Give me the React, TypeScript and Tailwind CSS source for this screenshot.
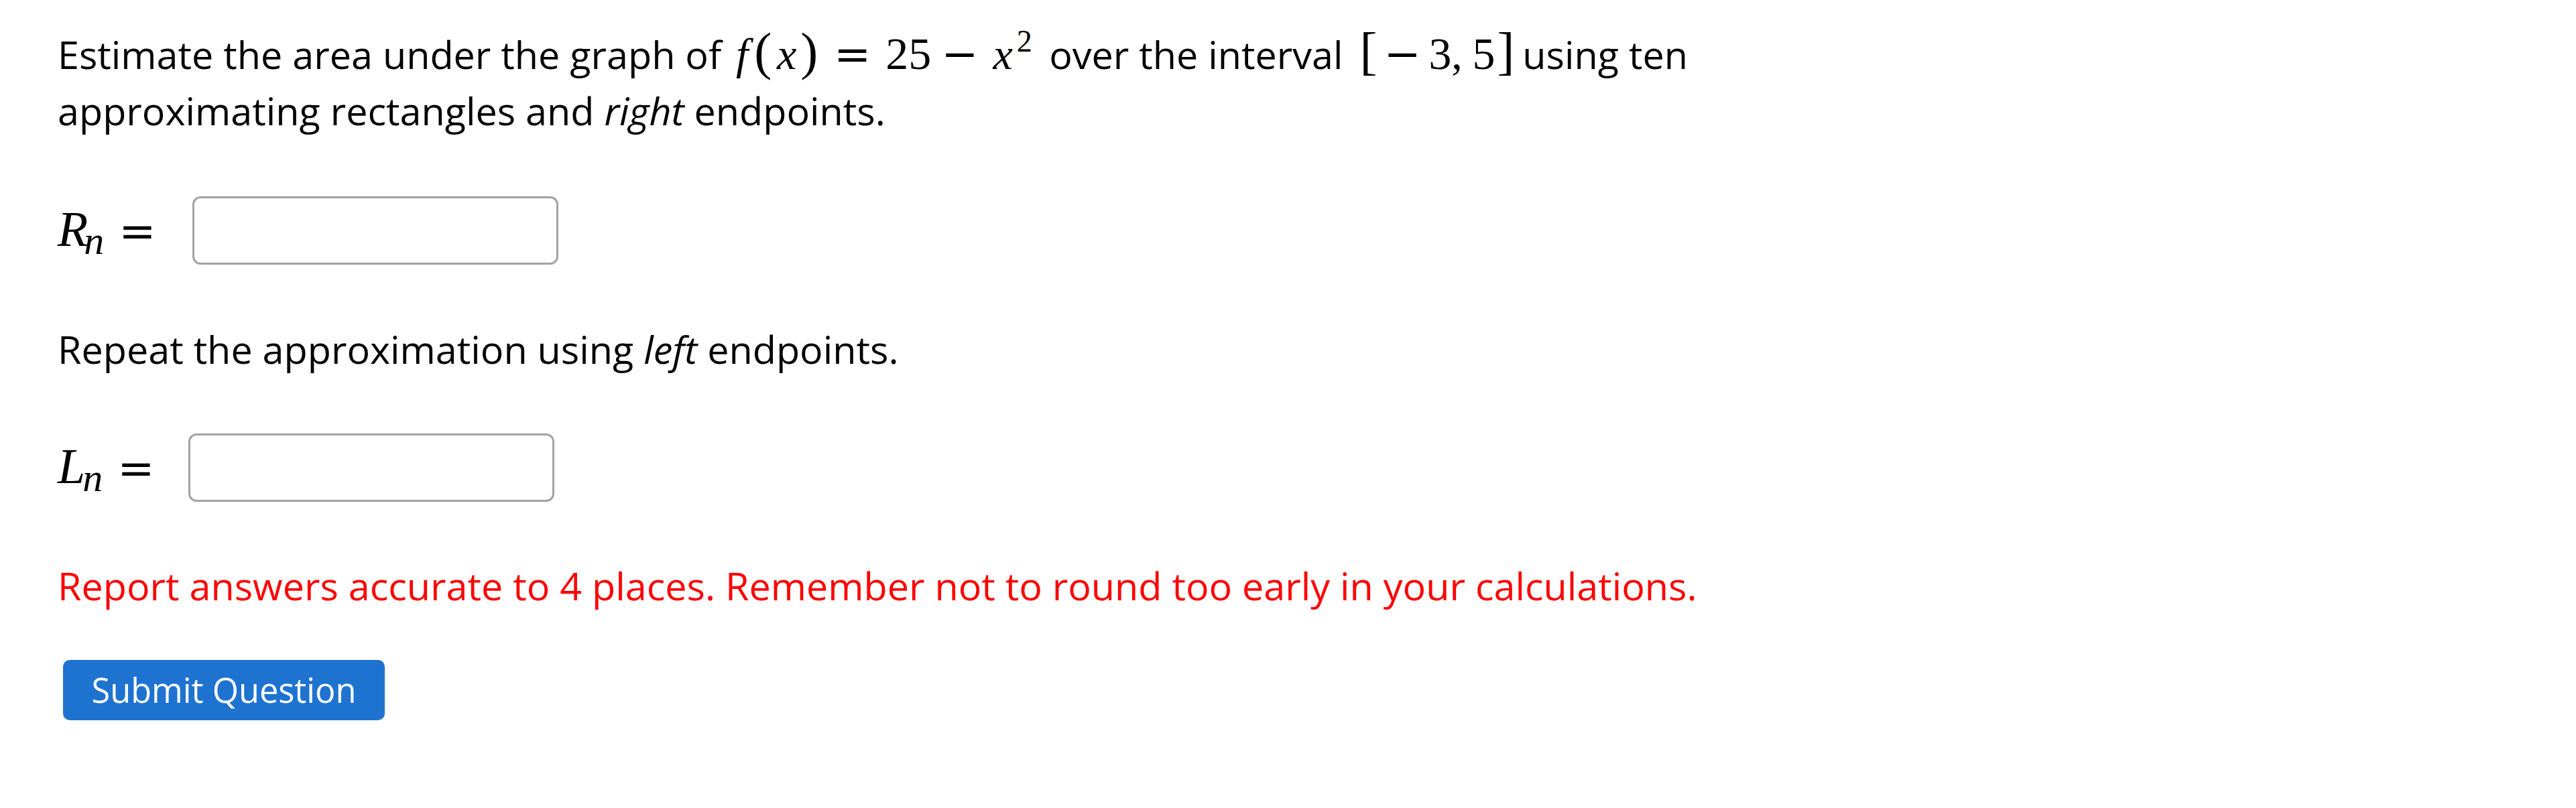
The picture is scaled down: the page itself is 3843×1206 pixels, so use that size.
import React from "react";

const M = "font-['Liberation_Serif',serif]";
const OP = "font-['DejaVu_Serif',serif] text-[66px]";

function G({ w, c, children }: { w: string; c?: string; children: React.ReactNode }) {
  return <span className={`inline-block text-center ${w} ${c ?? ""}`}>{children}</span>;
}

export default function App() {
  return (
    <div className="min-h-[1206px] w-full bg-white">
      <div className="pl-[86px] pt-[39px] font-['Open_Sans',sans-serif] text-[57.5px] leading-[84px] text-black">
        <p>
          Estimate the area under the graph of{" "}
          <span className={`${M} text-[66px] leading-[0] whitespace-nowrap`}>
            <G w="w-[32px]"><i>f</i></G>
            <G w="w-[30px]" c="text-[78px]">(</G>
            <G w="w-[41px]"><i>x</i></G>
            <G w="w-[23px]" c="text-[78px]">)</G>
            <G w="w-[57px]" c={`ml-[26px] ${OP}`}>=</G>
            <G w="w-[64px]" c="ml-[21px] text-[68px]">25</G>
            <G w="w-[54px]" c={`ml-[19px] ${OP}`}>−</G>
            <G w="w-[40px]" c="ml-[18px]"><i>x</i></G>
            <G w="w-[24px]" c="text-[46px] relative -top-[26px]">2</G>
            <span className="inline-block w-[10px]" />
          </span>{" "}
          over the interval{" "}
          <span className={`${M} text-[66px] leading-[0] whitespace-nowrap`}>
            <G w="w-[18px]" c="ml-[10px] text-[78px]">[</G>
            <G w="w-[54px]" c={`ml-[18px] ${OP}`}>−</G>
            <G w="w-[33px]" c="ml-[13px] text-[68px]">3</G>
            <G w="w-[18px]">,</G>
            <G w="w-[33px]" c="ml-[14px] text-[68px]">5</G>
            <G w="w-[17px]" c="ml-[4px] text-[78px]">]</G>
          </span>
          <span className="inline-block w-[6px]" />{" "}
          using ten
          <br />
          approximating rectangles and <em>right</em> endpoints.
        </p>

        <div className="mt-[86px] flex items-center h-[102px]">
          <span className={`${M} text-[74px] w-[159px] whitespace-nowrap flex items-baseline`}>
            <i>R</i>
            <i className="text-[60px] relative top-[12px] -ml-[6px]">n</i>
            <span className={`ml-[22px] ${OP}`}>=</span>
          </span>
          <input
            type="text"
            aria-label="R_n"
            className="ml-[42px] w-[546px] h-[102px] rounded-[12px] border-[3px] border-[#a3a3a3] bg-white outline-none"
          />
        </div>

        <p className="mt-[84px]">
          Repeat the approximation using <em>left</em> endpoints.
        </p>

        <div className="mt-[84px] flex items-center h-[102px]">
          <span className={`${M} text-[74px] w-[153px] whitespace-nowrap flex items-baseline`}>
            <i>L</i>
            <i className="text-[60px] relative top-[12px] -ml-[4px]">n</i>
            <span className={`ml-[22px] ${OP}`}>=</span>
          </span>
          <input
            type="text"
            aria-label="L_n"
            className="ml-[42px] w-[546px] h-[102px] rounded-[12px] border-[3px] border-[#a3a3a3] bg-white outline-none"
          />
        </div>

        <p className="mt-[83px] text-[#ff0000]">
          Report answers accurate to 4 places. Remember not to round too early in your calculations.
        </p>

        <button
          type="button"
          className="mt-[69px] ml-[8px] h-[90px] w-[480px] rounded-[10px] bg-[#1f73d0] text-white text-[50.5px] leading-none font-['Open_Sans',sans-serif]"
        >
          Submit Question
        </button>
      </div>
    </div>
  );
}
